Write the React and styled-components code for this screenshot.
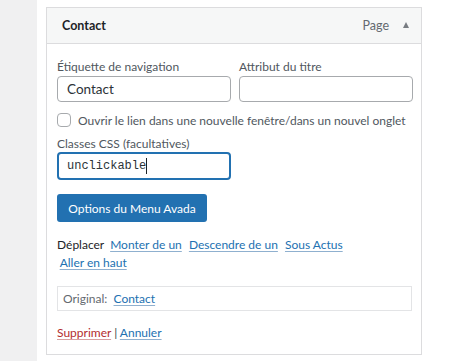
import React from 'react';
import styled, { createGlobalStyle } from 'styled-components';

const GlobalStyle = createGlobalStyle`
  html, body {
    margin: 0;
    padding: 0;
    background: #ffffff;
  }
  body {
    font-family: Lato, "Noto Sans", Arial, sans-serif;
    font-size: 12px;
    color: #3c434a;
  }
`;

const Page = styled.div`
  display: flex;
  width: 474px;
  height: 361px;
  overflow: hidden;
`;

const SideStrip = styled.div`
  width: 37px;
  flex: none;
  background: #f0f0f1;
`;

const Content = styled.div`
  flex: 1;
  padding: 7px 0 0 9px;
`;

const Panel = styled.div`
  width: 374px;
  border: 1px solid #dcdcde;
  background: #fff;
`;

const Header = styled.div`
  display: flex;
  align-items: center;
  height: 35px;
  padding: 0 12px 0 15px;
  background: #f6f7f7;
  border-bottom: 1px solid #dcdcde;
`;

const Title = styled.div`
  flex: 1;
  font-weight: 700;
  font-size: 12.5px;
  color: #1d2327;
`;

const ItemType = styled.span`
  color: #646970;
  font-size: 12.5px;
  margin-right: 14px;
`;

const Toggle = styled.span`
  width: 0;
  height: 0;
  border-left: 3.5px solid transparent;
  border-right: 3.5px solid transparent;
  border-bottom: 6px solid #787c82;
  margin-bottom: 2px;
`;

const Body = styled.div`
  padding: 14px 9px 12px 10px;
`;

const FieldRow = styled.div`
  display: grid;
  grid-template-columns: 174px 174px;
  column-gap: 8px;
`;

const Field = styled.label`
  display: flex;
  flex-direction: column;
`;

const Label = styled.span`
  font-size: 12px;
  line-height: 17px;
  color: #50575e;
`;

const Input = styled.div`
  box-sizing: border-box;
  height: ${p => (p.$focused ? '28px' : '26px')};
  margin-top: ${p => (p.$focused ? '0' : '1px')};
  padding: 0 ${p => (p.$focused ? '8px' : '9px')};
  display: flex;
  align-items: center;
  border: ${p => (p.$focused ? '2px solid #2271b1' : '1px solid #a7aaad')};
  border-radius: 4px;
  font-family: ${p => (p.$mono ? '"Liberation Mono", "DejaVu Sans Mono", monospace' : 'inherit')};
  font-size: ${p => (p.$mono ? '12px' : '13.5px')};
  color: #2c3338;
`;

const Caret = styled.span`
  display: inline-block;
  width: 1px;
  height: 16px;
  background: #1d2327;
`;

const CheckRow = styled.label`
  display: flex;
  align-items: center;
  gap: 7px;
  height: 14px;
  margin-top: 11px;
  font-size: 12px;
  white-space: nowrap;
  color: #50575e;
`;

const Checkbox = styled.span`
  box-sizing: border-box;
  width: 14px;
  height: 14px;
  border: 1px solid #a7aaad;
  border-radius: 4px;
  flex: none;
`;

const CssField = styled(Field)`
  margin-top: 8px;
  width: 174px;
`;

const Button = styled.button`
  display: block;
  margin-top: 14px;
  width: 150px;
  height: 28px;
  border: none;
  border-radius: 3px;
  background: #2271b1;
  color: #fff;
  font-family: inherit;
  font-size: 12px;
  padding: 0;
`;

const MoveBlock = styled.div`
  margin-top: 14px;
  font-size: 12px;
  line-height: 18px;
  color: #1d2327;
`;

const Link = styled.a`
  color: ${p => (p.$danger ? '#b32d2e' : '#2271b1')};
  text-decoration: underline;
  text-underline-offset: 2px;
  text-decoration-color: ${p => (p.$danger ? '#d7a0a0' : '#8fb0cf')};
  margin-right: ${p => p.$gap || '0'};
  cursor: pointer;
`;

const Original = styled.div`
  box-sizing: border-box;
  margin-top: 14px;
  height: 25px;
  display: flex;
  align-items: center;
  padding: 0 5px;
  border: 1px solid #e3e4e6;
  font-size: 12px;
  color: #646970;
`;

const Actions = styled.div`
  margin-top: 13px;
  font-size: 12px;
  line-height: 18px;
  color: #3c434a;
`;

export default function App() {
  return (
    <>
      <GlobalStyle />
      <Page>
        <SideStrip />
        <Content>
          <Panel>
            <Header>
              <Title>Contact</Title>
              <ItemType>Page</ItemType>
              <Toggle />
            </Header>
            <Body>
              <FieldRow>
                <Field>
                  <Label>Étiquette de navigation</Label>
                  <Input>Contact</Input>
                </Field>
                <Field>
                  <Label>Attribut du titre</Label>
                  <Input />
                </Field>
              </FieldRow>
              <CheckRow>
                <Checkbox />
                Ouvrir le lien dans une nouvelle fenêtre/dans un nouvel onglet
              </CheckRow>
              <CssField>
                <Label>Classes CSS (facultatives)</Label>
                <Input $focused $mono>
                  unclickable<Caret />
                </Input>
              </CssField>
              <Button>Options du Menu Avada</Button>
              <MoveBlock>
                Déplacer&nbsp; <Link $gap="4px">Monter de un</Link> <Link $gap="4px">Descendre de un</Link> <Link>Sous Actus</Link>
                <br />
                &nbsp;<Link>Aller en haut</Link>
              </MoveBlock>
              <Original>
                Original:&nbsp;&nbsp;<Link>Contact</Link>
              </Original>
              <Actions>
                <Link $danger>Supprimer</Link> | <Link>Annuler</Link>
              </Actions>
            </Body>
          </Panel>
        </Content>
      </Page>
    </>
  );
}
